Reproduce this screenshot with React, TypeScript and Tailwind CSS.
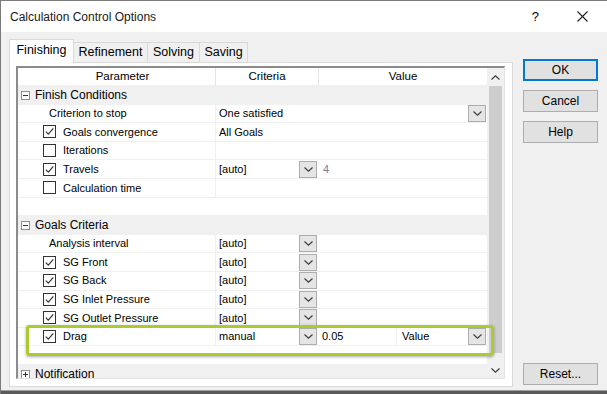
import React from "react";

type Row =
  | { kind: "group"; label: string; open: boolean }
  | { kind: "blank" }
  | {
      kind: "item";
      label: string;
      check?: boolean;
      criteria?: string;
      drop?: boolean;
      span?: boolean;
      value?: string;
      muted?: boolean;
      split?: string;
    };

const rows: Row[] = [
  { kind: "group", label: "Finish Conditions", open: true },
  { kind: "item", label: "Criterion to stop", criteria: "One satisfied", span: true },
  { kind: "item", label: "Goals convergence", check: true, criteria: "All Goals" },
  { kind: "item", label: "Iterations", check: false },
  { kind: "item", label: "Travels", check: true, criteria: "[auto]", drop: true, value: "4", muted: true },
  { kind: "item", label: "Calculation time", check: false },
  { kind: "blank" },
  { kind: "group", label: "Goals Criteria", open: true },
  { kind: "item", label: "Analysis interval", criteria: "[auto]", drop: true },
  { kind: "item", label: "SG Front", check: true, criteria: "[auto]", drop: true },
  { kind: "item", label: "SG Back", check: true, criteria: "[auto]", drop: true },
  { kind: "item", label: "SG Inlet Pressure", check: true, criteria: "[auto]", drop: true },
  { kind: "item", label: "SG Outlet Pressure", check: true, criteria: "[auto]", drop: true },
  { kind: "item", label: "Drag", check: true, criteria: "manual", drop: true, value: "0.05", split: "Value" },
  { kind: "blank" },
  { kind: "group", label: "Notification", open: false },
];

function Chevron({ up }: { up?: boolean }) {
  return (
    <svg width="9" height="5" viewBox="0 0 9 5" fill="none">
      <path d={up ? "M0.5 4.5 L4.5 0.8 L8.5 4.5" : "M0.5 0.5 L4.5 4.2 L8.5 0.5"} stroke="#3a3a3a" strokeWidth="1.1" />
    </svg>
  );
}

function DropButton() {
  return (
    <div className="mr-px flex h-[17px] w-[18px] shrink-0 items-center justify-center border border-[#adadad] bg-[#e5e5e5]">
      <Chevron />
    </div>
  );
}

function Check({ on }: { on: boolean }) {
  return (
    <div className="flex h-[13px] w-[13px] shrink-0 items-center justify-center border border-[#333] bg-white">
      {on && (
        <svg width="11" height="11" viewBox="0 0 11 11" fill="none">
          <path d="M1.8 5.6 L4.3 8.2 L9.3 2.4" stroke="#333" strokeWidth="1.2" />
        </svg>
      )}
    </div>
  );
}

function Toggle({ open }: { open: boolean }) {
  return (
    <div className="relative h-[9px] w-[9px] shrink-0 border border-[#8f8f8f] bg-white">
      <div className="absolute left-[1px] top-[3px] h-px w-[5px] bg-[#333]" />
      {!open && <div className="absolute left-[3px] top-[1px] h-[5px] w-px bg-[#333]" />}
    </div>
  );
}

function GridRow({ row }: { row: Row }) {
  if (row.kind === "group") {
    return (
      <div className="flex h-[18.6px] shrink-0 items-center bg-[#f0f0f0] pl-[3px]">
        <Toggle open={row.open} />
        <span className="ml-[5px] text-[12px]">{row.label}</span>
      </div>
    );
  }
  if (row.kind === "blank") {
    return <div className="h-[18.6px] shrink-0 border-b border-[#f0f0f0] bg-white" />;
  }
  return (
    <div className="flex h-[18.6px] shrink-0 border-b border-[#f0f0f0] bg-white">
      <div className="flex w-[197px] shrink-0 items-center">
        {row.check === undefined ? (
          <span className="ml-[31px]">{row.label}</span>
        ) : (
          <>
            <div className="ml-[25px]">
              <Check on={row.check} />
            </div>
            <span className="ml-[7px]">{row.label}</span>
          </>
        )}
      </div>
      {row.span ? (
        <div className="flex flex-1 items-center border-l border-[#f0f0f0] pl-[3px]">
          <span className="flex-1">{row.criteria}</span>
          <DropButton />
        </div>
      ) : (
        <>
          <div className="flex w-[103px] shrink-0 items-center border-l border-[#f0f0f0] pl-[3px]">
            <span className="flex-1">{row.criteria}</span>
            {row.drop && <DropButton />}
          </div>
          {row.split ? (
            <div className="flex flex-1 items-center">
              <div className="flex h-full w-[79px] items-center border-r border-[#f0f0f0] pl-[4px]">{row.value}</div>
              <span className="flex-1 pl-[5px]">{row.split}</span>
              <DropButton />
            </div>
          ) : (
            <div className={`flex flex-1 items-center pl-[5px] ${row.muted ? "text-[#7d7d8a]" : ""}`}>{row.value}</div>
          )}
        </>
      )}
    </div>
  );
}

function Button({ label, primary, className = "" }: { label: string; primary?: boolean; className?: string }) {
  return (
    <div
      className={`flex h-[22px] w-[75px] items-center justify-center bg-[#e1e1e1] text-[12px] ${
        primary ? "border-2 border-[#0078d7]" : "border border-[#adadad]"
      } ${className}`}
    >
      {label}
    </div>
  );
}

export default function App() {
  const tabs = ["Finishing", "Refinement", "Solving", "Saving"];
  const widths = ["w-[65px]", "w-[75px]", "w-[53px]", "w-[49px]"];
  return (
    <div className="relative flex h-[394px] w-[607px] flex-col overflow-hidden border-l border-t border-[#7a7a7a] bg-[#f0f0f0] font-['Liberation_Sans',Arial,sans-serif] text-[11px] text-black">
      <div className="flex h-[31px] shrink-0 items-center bg-white pl-[9px]">
        <span className="flex-1 text-[12px] text-[#1a1a1a]">Calculation Control Options</span>
        <span className="mr-[38px] text-[13px]">?</span>
        <svg width="11" height="11" viewBox="0 0 11 11" className="mr-[19px]">
          <path d="M0.5 0.5 L10.5 10.5 M10.5 0.5 L0.5 10.5" stroke="#222" strokeWidth="1.1" />
        </svg>
      </div>

      <div className="flex flex-1 pl-[8px] pt-[7px]">
        <div className="flex w-[504px] flex-col">
          <div className="relative z-10 -mb-px flex h-[24px] items-end">
            {tabs.map((t, i) =>
              i === 0 ? (
                <div
                  key={t}
                  className={`${widths[i]} flex h-[24px] items-center justify-center border border-b-0 border-[#d9d9d9] bg-white pb-[2px] text-[12.5px]`}
                >
                  {t}
                </div>
              ) : (
                <div
                  key={t}
                  className={`${widths[i]} -ml-px mb-px flex h-[20px] items-center justify-center border border-b-0 border-[#d9d9d9] bg-[#f0f0f0] text-[12.5px]`}
                >
                  {t}
                </div>
              )
            )}
          </div>
          <div className="h-[325px] border border-[#d9d9d9] bg-white pl-[6px] pt-[3px]">
            <div className="flex h-[313px] w-[489px] overflow-hidden border-l-2 border-t-2 border-b border-r border-l-[#8c8c8c] border-t-[#8c8c8c] border-b-[#e3e3e3] border-r-[#e3e3e3]">
              <div className="flex flex-1 flex-col">
                <div className="flex h-[18px] shrink-0 border-b border-[#f0f0f0] bg-white text-[11.5px]">
                  <div className="flex w-[197px] items-center justify-center pl-[12px]">Parameter</div>
                  <div className="flex w-[103px] items-center justify-center border-l border-[#e5e5e5]">Criteria</div>
                  <div className="flex flex-1 items-center justify-center border-l border-[#e5e5e5]">Value</div>
                </div>
                {rows.map((r, i) => (
                  <GridRow key={i} row={r} />
                ))}
              </div>
              <div className="flex w-[17px] shrink-0 flex-col items-center bg-[#f0f0f0]">
                <div className="flex h-[18px] shrink-0 items-center justify-center">
                  <Chevron up />
                </div>
                <div className="h-[267px] w-[13px] shrink-0 bg-[#cdcdcd]" />
                <div className="flex flex-1 items-end justify-center pb-[5px]">
                  <Chevron />
                </div>
              </div>
            </div>
          </div>
        </div>

        <div className="ml-[10px] flex flex-col pt-[20px]">
          <Button label="OK" primary />
          <Button label="Cancel" className="mt-[9px]" />
          <Button label="Help" className="mt-[9px]" />
          <Button label="Reset..." className="mt-[220px]" />
        </div>
      </div>

      <div className="h-[4px] shrink-0 border-t border-[#a0a0a0] bg-[#5a5a5a]" />

      <div className="pointer-events-none absolute left-[25px] top-[324px] h-[31px] w-[468px] rounded-[3px] border-[3px] border-[#a9cb2e] shadow-[0_1px_3px_rgba(0,0,0,0.35)]" />
    </div>
  );
}
